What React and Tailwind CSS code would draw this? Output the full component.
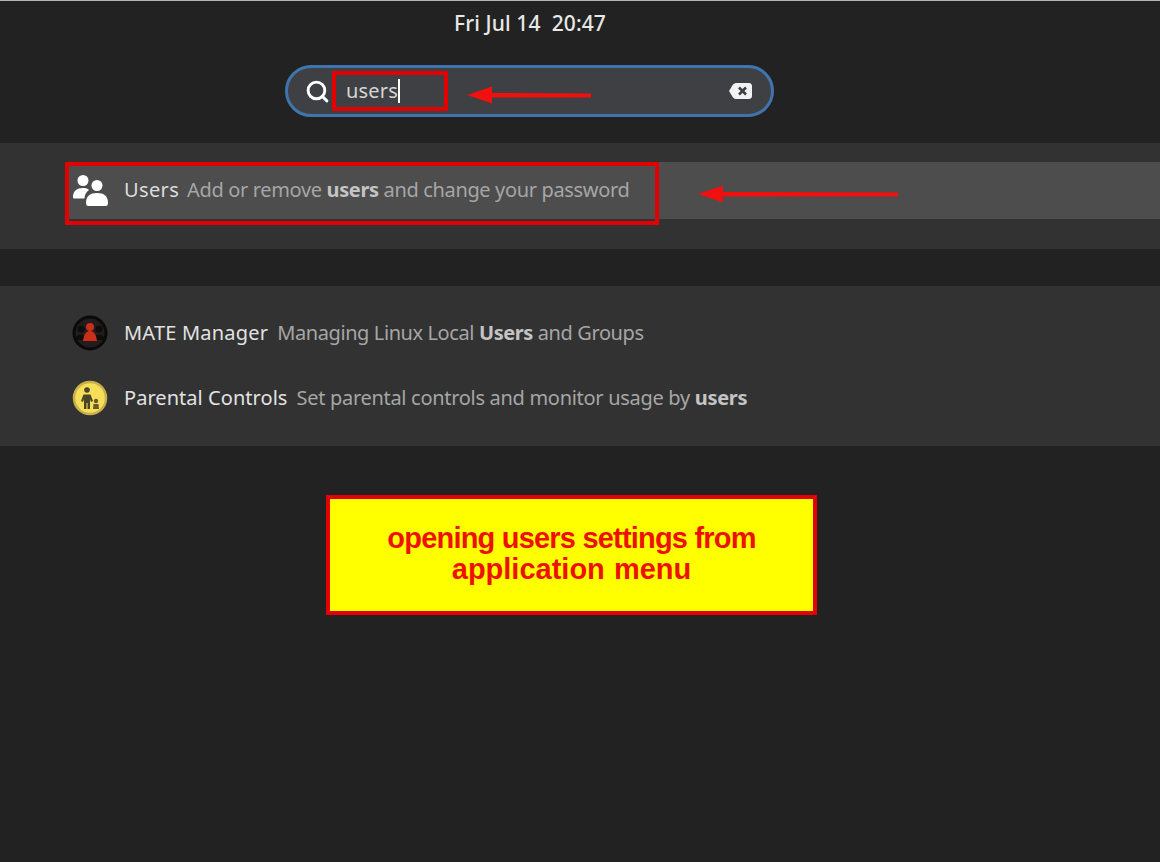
import { Search } from "lucide-react";

function Arrow({ width, className }) {
  return (
    <svg width={width} height="20" viewBox={`0 0 ${width} 20`} className={className}>
      <path d={`M0 10 L25 1.5 L25 8 L${width} 8.5 L${width} 12.5 L25 12.5 L25 18.5 Z`} fill="#f01010" />
    </svg>
  );
}

function ClearIcon() {
  return (
    <svg width="25" height="18" viewBox="0 0 25 18">
      <path d="M8 1 L21 1 C23 1 24 2.500 24 4 L24 14 C24 15.500 23 17 21 17 L8 17 C7 17 6 16.500 5 15.500 L1 9 L5 2.500 C6 1.500 7 1 8 1 Z" fill="#f2f2f2" />
      <path d="M11 5.500 L18 12.500 M18 5.500 L11 12.500" stroke="#3e4044" strokeWidth="2.600" />
    </svg>
  );
}

function UsersIcon() {
  return (
    <svg width="36" height="34" viewBox="0 0 36 34" fill="#fff">
      <circle cx="11" cy="7.500" r="5.500" />
      <circle cx="25" cy="12.500" r="5.500" />
      <path d="M1 24 C1 18 5 15 11 15 C14 15 15.500 15.500 17 17 C14 19 12.500 22 12.500 25.500 L2.500 25.500 C1.500 25.500 1 25 1 24 Z" />
      <path d="M14 30 C14 23 18 20 25 20 C32 20 36 23 36 30 C36 32 35 33 34 33 L16 33 C15 33 14 32 14 30 Z" />
    </svg>
  );
}

function MateIcon() {
  return (
    <svg width="36" height="36" viewBox="0 0 36 36">
      <circle cx="18" cy="18" r="16" fill="#231c1c" stroke="#0a0a0a" strokeWidth="3" />
      <circle cx="9" cy="14" r="3.500" fill="#0d0d0d" />
      <circle cx="27" cy="14" r="3.500" fill="#0d0d0d" />
      <path d="M3 25 C4 18 14 18 15 25 Z" fill="#0d0d0d" />
      <path d="M21 25 C22 18 32 18 33 25 Z" fill="#0d0d0d" />
      <circle cx="18" cy="12" r="4" fill="#c8301a" />
      <path d="M11 26 C12 18 15 16 18 16 C21 16 24 18 25 26 Z" fill="#c8301a" />
    </svg>
  );
}

function ParentalIcon() {
  return (
    <svg width="36" height="36" viewBox="0 0 36 36">
      <circle cx="18" cy="18" r="16" fill="#f5df5a" stroke="#c9b04a" strokeWidth="2.500" />
      <circle cx="15" cy="10" r="2.800" fill="#4a4426" />
      <path d="M11.500 14.500 L18.500 14.500 L21 21 L19 22 L18 19 L18 29 L15.500 29 L15.500 23 L14.500 23 L14.500 29 L12 29 L12 19 L11 22 L9 21 Z" fill="#4a4426" />
      <circle cx="24" cy="21" r="2.200" fill="#6b5a28" />
      <path d="M21.500 24 L26.500 24 L27 29 L21 29 Z" fill="#6b5a28" />
    </svg>
  );
}

function Result({ icon, name, nameClass, desc, descClass }) {
  return (
    <div className="flex items-center h-[65px] pl-[72px] pb-[2px]">
      <div className="w-[36px] flex justify-center">{icon}</div>
      <span className={`ml-[16px] text-[#e2e2e2] ${nameClass}`}>{name}</span>
      <span className={`ml-[9px] text-[#a6a6a6] ${descClass}`}>{desc}</span>
    </div>
  );
}

export default function App() {
  return (
    <div className="min-h-[862px] bg-[#222222] border-t border-t-[#b5b5b5] font-['Noto_Sans',sans-serif] text-[20px] overflow-hidden">
      <div className="h-[46px] flex items-center justify-center pr-[100px] text-[21px] font-medium tracking-[0.1px] text-[#e8e8e8]">
        Fri Jul 14&nbsp;&nbsp;20:47
      </div>

      <div className="flex justify-center mt-[18px] pr-[101px]">
        <div className="relative w-[489px] h-[52px] rounded-full border-[3px] border-[#3f74ad] bg-[#3e4044] flex items-center pl-[17px] pr-[18px] text-[#d6d6d6]">
          <Search size={25} strokeWidth={2.800} className="text-white" />
          <span className="ml-[16px] tracking-[0.2px]">users</span>
          <span className="w-[2px] h-[24px] bg-white" />
          <div className="ml-auto"><ClearIcon /></div>
          <div className="absolute left-[44px] top-[3px] w-[116px] h-[40px] border-[4px] border-[#e30000]" />
          <Arrow width={124} className="absolute left-[179px] top-[17px]" />
        </div>
      </div>

      <div className="mt-[26px] h-[106px] bg-[#323232] pt-[19px]">
        <div className="relative ml-[65px] h-[57px] bg-[#4d4d4d] flex items-center pb-[2px]">
          <div className="ml-[7px] w-[36px] flex justify-center"><UsersIcon /></div>
          <span className="ml-[16px] text-[#dcdcdc] tracking-[0.35px]">Users</span>
          <span className="ml-[8px] text-[#a6a6a6] tracking-[-0.35px]">
            Add or remove <b className="font-bold text-[#c4c4c4]">users</b> and change your password
          </span>
          <div className="absolute left-0 top-0 w-[594px] h-[63px] border-[4px] border-[#e30000]" />
          <Arrow width={200} className="absolute left-[633px] top-[22px]" />
        </div>
      </div>

      <div className="mt-[37px] h-[160px] bg-[#323232] pt-[15px]">
        <Result
          icon={<MateIcon />}
          name="MATE Manager"
          nameClass="tracking-[0.2px]"
          descClass="tracking-[-0.4px]"
          desc={<>Managing Linux Local <b className="font-bold text-[#c4c4c4]">Users</b> and Groups</>}
        />
        <Result
          icon={<ParentalIcon />}
          name="Parental Controls"
          nameClass="tracking-[0.05px]"
          descClass="tracking-[-0.3px]"
          desc={<>Set parental controls and monitor usage by <b className="font-bold text-[#c4c4c4]">users</b></>}
        />
      </div>

      <div className="mt-[49px] ml-[326px] w-[491px] h-[120px] bg-[#ffff00] border-[4px] border-[#e30000] flex items-center justify-center text-center font-['Liberation_Sans',sans-serif] font-bold text-[29px] leading-[31px] text-[#ee1100] pb-[3px]">
        <div>
          <div className="tracking-[-0.8px]">opening users settings from</div>
          <div className="[word-spacing:1px]">application menu</div>
        </div>
      </div>
    </div>
  );
}
